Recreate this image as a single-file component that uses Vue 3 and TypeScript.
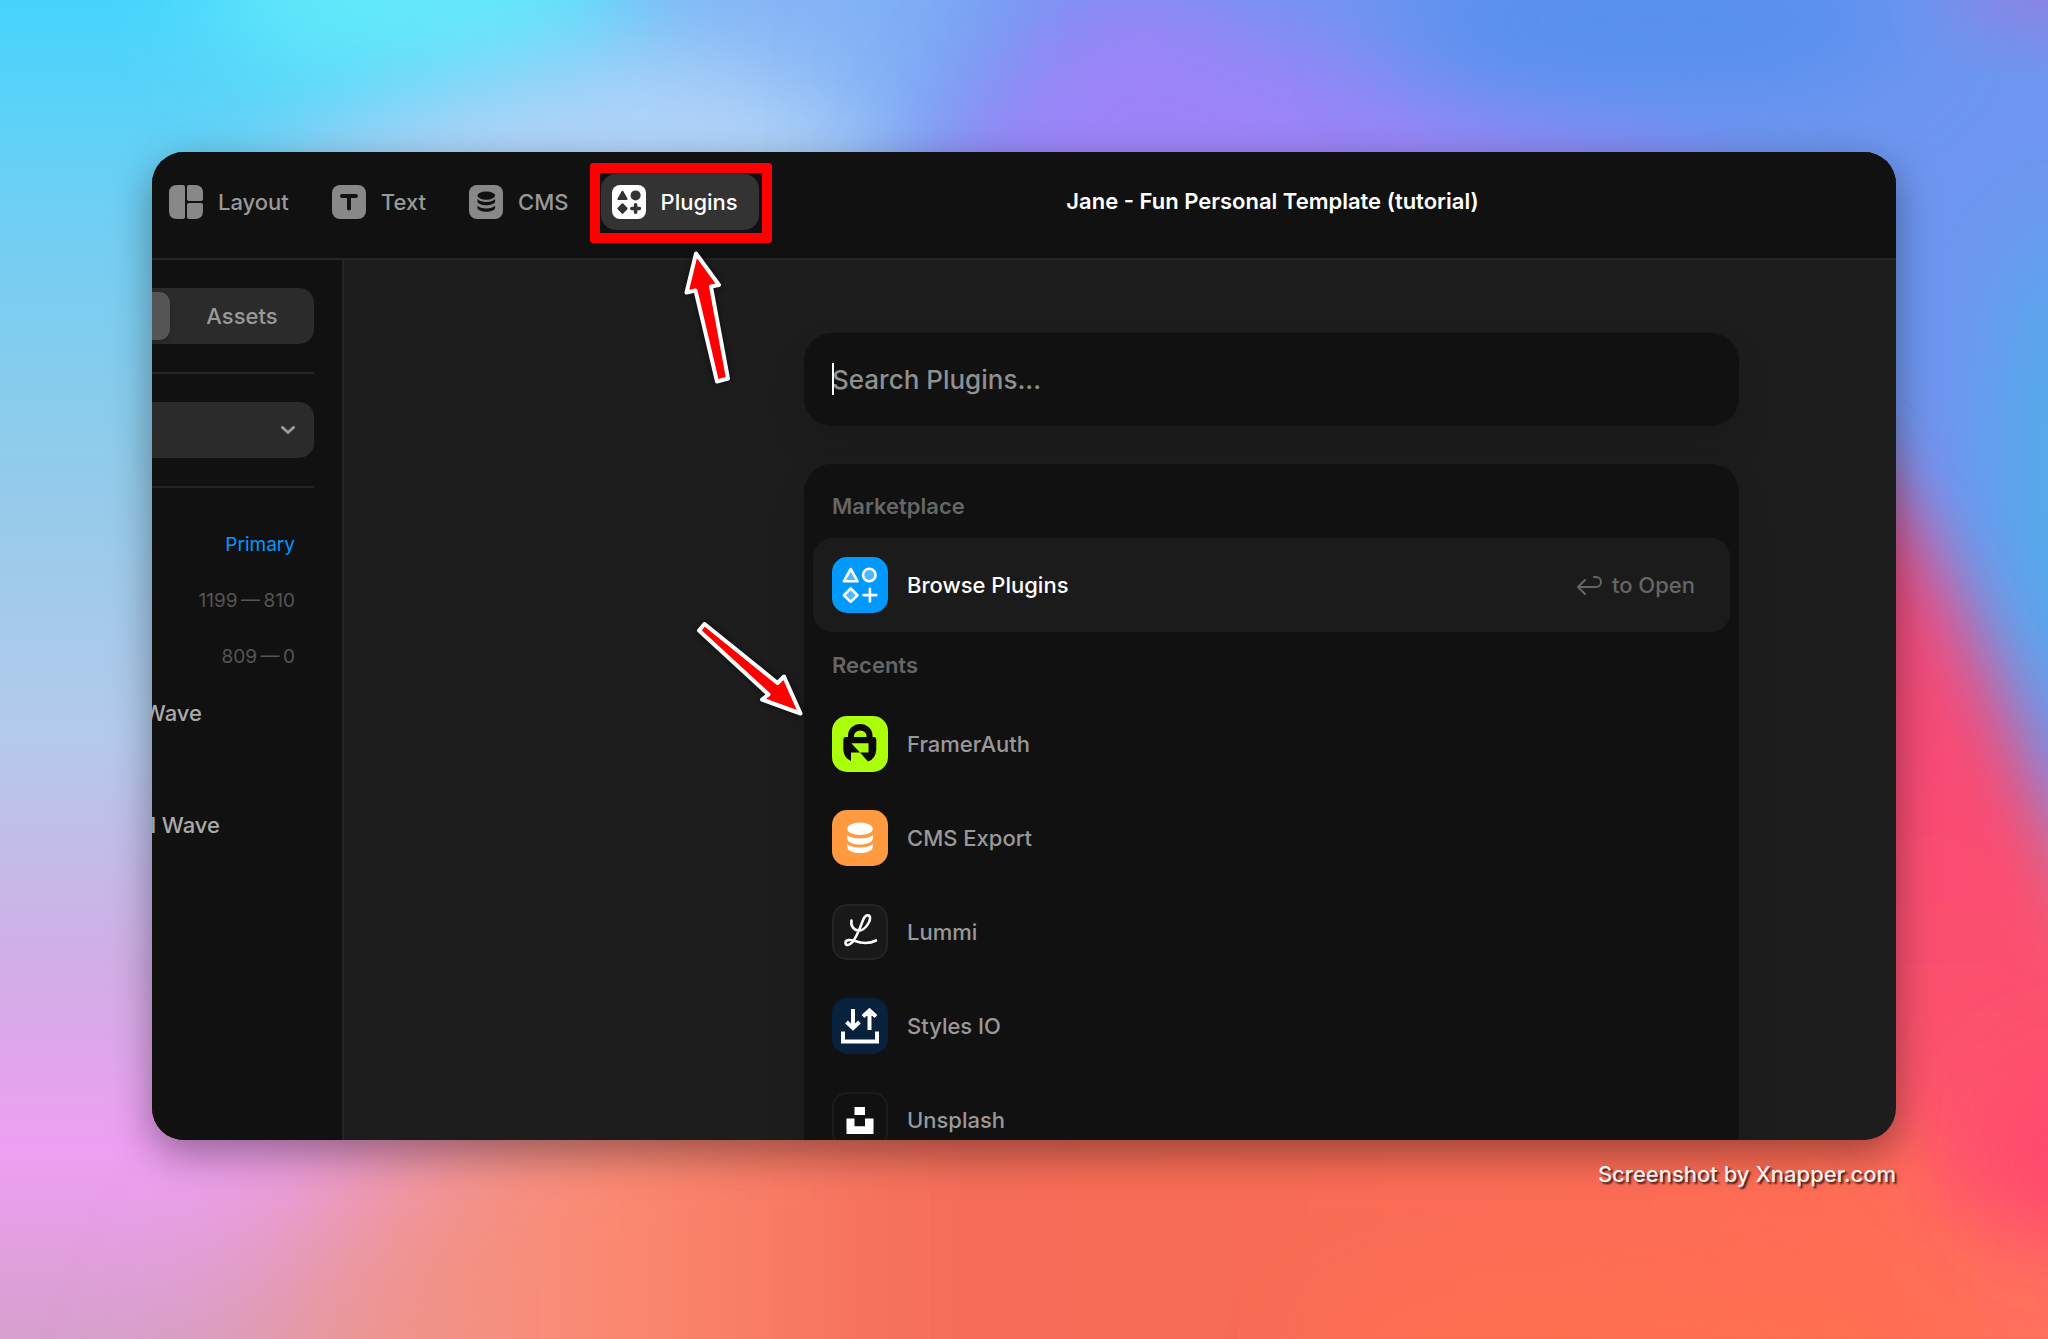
<script setup lang="ts">
import { ref } from 'vue'

type PluginIcon = 'auth' | 'export' | 'lummi' | 'styles' | 'unsplash'

interface PluginEntry {
  name: string
  icon: PluginIcon
}

const recents: PluginEntry[] = [
  { name: 'FramerAuth', icon: 'auth' },
  { name: 'CMS Export', icon: 'export' },
  { name: 'Lummi', icon: 'lummi' },
  { name: 'Styles IO', icon: 'styles' },
  { name: 'Unsplash', icon: 'unsplash' },
]

const query = ref('')
</script>

<template>
  <div class="page">
    <svg class="wallpaper" viewBox="0 0 2048 1339" preserveAspectRatio="none" aria-hidden="true">
      <defs>
        <linearGradient id="base" x1="0" y1="0" x2="0" y2="1">
          <stop offset="0" stop-color="#46d4fc" />
          <stop offset="0.16" stop-color="#70cff4" />
          <stop offset="0.35" stop-color="#92cbea" />
          <stop offset="0.55" stop-color="#b4caec" />
          <stop offset="0.72" stop-color="#d2aee6" />
          <stop offset="0.86" stop-color="#ee9ff2" />
          <stop offset="1" stop-color="#d6a0cc" />
        </linearGradient>
        <linearGradient id="flame" x1="0" y1="0" x2="1" y2="0">
          <stop offset="0" stop-color="#e29cac" />
          <stop offset="0.1" stop-color="#f0948a" />
          <stop offset="0.19" stop-color="#fc8a70" />
          <stop offset="0.25" stop-color="#fa7e66" />
          <stop offset="0.34" stop-color="#f46c58" />
          <stop offset="0.75" stop-color="#ff6c54" />
          <stop offset="1" stop-color="#ff7a70" />
        </linearGradient>
        <linearGradient id="rose" x1="0" y1="0" x2="0" y2="1">
          <stop offset="0" stop-color="#e84c84" />
          <stop offset="0.5" stop-color="#fa4c72" />
          <stop offset="1" stop-color="#ff5868" />
        </linearGradient>
        <filter id="haze" x="-50%" y="-50%" width="200%" height="200%">
          <feGaussianBlur stdDeviation="80" />
        </filter>
        <filter id="soft" x="-50%" y="-50%" width="200%" height="200%">
          <feGaussianBlur stdDeviation="50" />
        </filter>
        <filter id="crisp" x="-50%" y="-50%" width="200%" height="200%">
          <feGaussianBlur stdDeviation="34" />
        </filter>
      </defs>
      <rect width="2048" height="1339" fill="url(#base)" />
      <path d="M560 -200 H2300 V500 H700Z" fill="#84b4f6" filter="url(#haze)" />
      <ellipse cx="410" cy="0" rx="210" ry="70" fill="#66ecfa" filter="url(#soft)" />
      <path d="M250 200 Q400 80 640 50 Q900 60 1000 400 H230Z" fill="#b2d4f8" filter="url(#soft)" />
      <path d="M1000 -200 H2300 V1000 H900 L960 60Z" fill="#6e96f0" filter="url(#haze)" />
      <path d="M890 260 Q990 60 1120 -40 Q1280 50 1600 130 Q1760 160 1760 300 H900Z" fill="#9c84f8" filter="url(#soft)" />
      <ellipse cx="1650" cy="20" rx="260" ry="80" fill="#5690ee" filter="url(#soft)" />
      <ellipse cx="2060" cy="-10" rx="110" ry="40" fill="#9080e0" filter="url(#crisp)" />
      <ellipse cx="2070" cy="470" rx="60" ry="240" fill="#50b0ea" filter="url(#soft)" />
      <path d="M180 1560 Q240 1240 480 1060 L1500 900 H2400 V1600Z" fill="url(#flame)" filter="url(#haze)" />
      <path d="M1700 420 L1840 420 Q1990 590 2120 1040 V1230 L1960 1210 L1800 1000Z" fill="url(#rose)" filter="url(#crisp)" />
      <ellipse cx="1640" cy="1350" rx="320" ry="70" fill="#ff7050" filter="url(#soft)" />
      <ellipse cx="2070" cy="1150" rx="80" ry="90" fill="#ff466e" filter="url(#soft)" />
    </svg>

    <div class="window">
      <header class="topbar">
        <nav class="tools">
          <button type="button" class="tool">
            <svg class="tool-icon" viewBox="0 0 34 34" aria-hidden="true">
              <path d="M8 0H14Q16 0 16 2V32Q16 34 14 34H8Q0 34 0 26V8Q0 0 8 0Z" />
              <path d="M20 0H26Q34 0 34 8V14Q34 16 32 16H20Q18 16 18 14V2Q18 0 20 0Z" />
              <path d="M20 18H32Q34 18 34 20V26Q34 34 26 34H20Q18 34 18 32V20Q18 18 20 18Z" />
            </svg>
            <span>Layout</span>
          </button>
          <button type="button" class="tool">
            <svg class="tool-icon" viewBox="0 0 34 34" aria-hidden="true">
              <rect width="34" height="34" rx="8" />
              <path d="M10 11H24M17 11V23.5" fill="none" stroke="#111" stroke-width="4" stroke-linecap="round" />
            </svg>
            <span>Text</span>
          </button>
          <button type="button" class="tool">
            <svg class="tool-icon" viewBox="0 0 34 34" aria-hidden="true">
              <rect width="34" height="34" rx="8" />
              <g fill="#111">
                <ellipse cx="17.3" cy="10.6" rx="8.8" ry="4.2" />
                <path d="M8.5 14C11 18 23.5 18 26.1 14V16.5C25 21.5 9.5 21.5 8.5 16.5Z" />
                <path d="M8.5 20.5C11 24.5 23.5 24.5 26.1 20.5V23C25 28 9.5 28 8.5 23Z" />
              </g>
            </svg>
            <span>CMS</span>
          </button>
          <div class="marked">
            <button type="button" class="tool active">
              <svg class="tool-icon" viewBox="0 0 34 34" aria-hidden="true">
                <rect width="34" height="34" rx="8" />
                <g fill="#333" stroke="#333" stroke-linejoin="round" stroke-linecap="round">
                  <path d="M10.5 6.8L14.6 14H6.4Z" stroke-width="2" />
                  <circle cx="23.6" cy="10.4" r="5" stroke="none" />
                  <path d="M10.5 19.2L14.6 23.5L10.5 27.8L6.4 23.5Z" stroke-width="2" />
                  <path d="M23.6 19.7V27.3M19.8 23.5H27.4" stroke-width="3.6" />
                </g>
              </svg>
              <span>Plugins</span>
            </button>
            <span class="highlight"></span>
            <svg class="arrow arrow-up" viewBox="683 250 46 134" aria-hidden="true">
              <path d="M695 253.5L718 285L710 286.5L727 378.5L716 381.5L694.5 290.5L685.5 292.5Z" />
            </svg>
          </div>
        </nav>
        <h1 class="title">Jane - Fun Personal Template (tutorial)</h1>
      </header>

      <div class="workspace">
        <aside class="sidebar">
          <div class="tabs">
            <span class="tab-thumb"></span>
            <button type="button" class="tab">Assets</button>
          </div>
          <button type="button" class="picker" aria-label="Choose page">
            <svg class="chevron" viewBox="0 0 14 8" aria-hidden="true"><path d="M1.5 1.5L7 6.5L12.5 1.5" /></svg>
          </button>
          <ul class="layers">
            <li class="range primary">Primary</li>
            <li class="range">1199&thinsp;—&thinsp;810</li>
            <li class="range">809&thinsp;—&thinsp;0</li>
            <li class="layer"><span class="layer-name short">Wave</span></li>
            <li class="layer"></li>
            <li class="layer"><span class="layer-name long">l Wave</span></li>
          </ul>
        </aside>

        <main class="canvas">
          <div class="search">
            <span class="caret"></span>
            <input v-model="query" type="text" class="search-input" placeholder="Search Plugins..." aria-label="Search plugins" />
          </div>

          <section class="results">
            <svg class="arrow arrow-down" viewBox="696 620 110 100" aria-hidden="true">
              <path d="M704.5 624L777.5 683L784 676.5L800.5 713.5L762 699.5L768.5 694.5L699 630.5Z" />
            </svg>
            <h2 class="group">Marketplace</h2>
            <button type="button" class="entry selected">
              <svg class="entry-icon" viewBox="0 0 56 56" aria-hidden="true">
                <rect width="56" height="56" rx="15" fill="#0099ff" />
                <g fill="#ffffff4d" stroke="#fff" stroke-width="2.6" stroke-linejoin="round" stroke-linecap="round">
                  <path d="M18.7 12L25.6 24.3H11.8Z" />
                  <circle cx="37.3" cy="18" r="6.3" />
                  <path d="M18.7 31.5L25.5 38.2L18.7 44.9L11.9 38.2Z" />
                  <path d="M37.9 31.7V44.5M31.5 38.1H44.3" />
                </g>
              </svg>
              <span>Browse Plugins</span>
              <span class="hint">
                <svg class="return" viewBox="0 0 26 20" aria-hidden="true">
                  <path d="M18 2H20A5 5 0 0 1 20 12H2M9 5L2 12L9 19" />
                </svg>
                to Open
              </span>
            </button>
            <h2 class="group">Recents</h2>
            <button v-for="plugin in recents" :key="plugin.name" type="button" class="entry">
              <svg v-if="plugin.icon === 'auth'" class="entry-icon" viewBox="0 0 56 56" aria-hidden="true">
                <rect width="56" height="56" rx="15" fill="#abff0a" />
                <path
                  fill="#0a0a0a"
                  fill-rule="evenodd"
                  d="M14 21H16V19.5A12 11.3 0 0 1 40.5 19.5V21H42Q44.3 21 44.3 24V34Q43.5 43 36 45.5L28 36.5H36.5V27.3H19.3L28 36.5H19V45Q12 42 11.3 34V24Q11.3 21 14 21ZM22 21H34.5V20A6.25 5.5 0 0 0 22 20Z"
                />
              </svg>
              <svg v-else-if="plugin.icon === 'export'" class="entry-icon" viewBox="0 0 56 56" aria-hidden="true">
                <rect width="56" height="56" rx="15" fill="#ff9a40" />
                <g fill="#fff">
                  <ellipse cx="28" cy="18.8" rx="12.8" ry="6.2" />
                  <path d="M15.2 25C19 29.5 37 29.5 40.8 25V28.5C40 36.5 16 36.5 15.2 28.5Z" />
                  <path d="M15.2 34C19 38.5 37 38.5 40.8 34V37C40 45 16 45 15.2 37Z" />
                </g>
              </svg>
              <svg v-else-if="plugin.icon === 'lummi'" class="entry-icon" viewBox="0 0 56 56" aria-hidden="true">
                <rect x="1" y="1" width="54" height="54" rx="14" fill="#191919" stroke="#242424" stroke-width="2" />
                <path
                  fill="none"
                  stroke="#fff"
                  stroke-width="2.6"
                  stroke-linecap="round"
                  d="M19.5 16.5C18.5 21.5 21.5 27 27.5 26.5C33.5 26 38.5 17 38 13.5C37.5 10 33.5 10.5 31.5 15C28.5 22 25.5 32 20.5 38C17.5 41.5 13.5 42 13.5 39C13.5 35.5 18 35.5 23 37C30 39.5 38 39.5 44 36.5"
                />
              </svg>
              <svg v-else-if="plugin.icon === 'styles'" class="entry-icon" viewBox="0 0 56 56" aria-hidden="true">
                <rect width="56" height="56" rx="15" fill="#08213d" />
                <path
                  fill="none"
                  stroke="#fff"
                  stroke-width="4"
                  d="M21 11V29M14.5 24L21 30L27.5 24M37.5 32V14M31 18.5L37.5 12.5L44 18.5M11 33.5V43.5H45V33.5"
                />
              </svg>
              <svg v-else class="entry-icon" viewBox="0 0 56 56" aria-hidden="true">
                <rect x="1" y="1" width="54" height="54" rx="14" fill="#111" stroke="#1c1c1c" stroke-width="2" />
                <path fill="#fff" d="M22.5 15H33V23H22.5ZM14.5 26.5H22.5V34.3H33V26.5H41.5V42H14.5Z" />
              </svg>
              <span>{{ plugin.name }}</span>
            </button>
          </section>
        </main>
      </div>
    </div>

    <footer class="credit">Screenshot by Xnapper.com</footer>
  </div>
</template>

<style>
body {
  margin: 0;
}
</style>

<style scoped>
.page {
  position: relative;
  display: flex;
  flex-direction: column;
  height: 100vh;
  padding: 152px 152px 151px;
  box-sizing: border-box;
  overflow: hidden;
  font-family: Inter, "Liberation Sans", sans-serif;
  font-size: 22px;
  font-weight: 500;
  line-height: 28px;
  color: #999;
}

.page *,
.page *::before {
  box-sizing: border-box;
}

.wallpaper {
  position: absolute;
  inset: 0;
  width: 100%;
  height: 100%;
}

button {
  margin: 0;
  padding: 0;
  border: 0;
  background: none;
  color: inherit;
  font: inherit;
  text-align: left;
}

.window {
  position: relative;
  flex: 1;
  min-height: 0;
  display: flex;
  flex-direction: column;
  overflow: hidden;
  border-radius: 32px;
  background: #1d1d1d;
  box-shadow: 0 14px 40px rgba(0, 0, 0, 0.38);
}

.topbar {
  position: relative;
  z-index: 1;
  flex: none;
  display: flex;
  align-items: flex-start;
  justify-content: space-between;
  height: 108px;
  padding: 22px 156px 0 6px;
  border-bottom: 2px solid #242424;
  background: #111;
}

.tools {
  display: flex;
  gap: 11px;
}

.tool {
  display: flex;
  align-items: center;
  gap: 15px;
  height: 56px;
  padding: 0 21px 0 11px;
  border-radius: 15px;
}

.tool.active {
  background: #333;
  color: #fff;
}

.tool-icon {
  width: 34px;
  height: 34px;
  fill: #888;
}

.active .tool-icon {
  fill: #fff;
}

.marked {
  position: relative;
}

.highlight {
  position: absolute;
  inset: -11px -13px -13px -11px;
  border: 10px solid #f00;
  border-radius: 3px;
}

.arrow {
  position: absolute;
  overflow: visible;
  fill: #f00;
  stroke: #fff;
  stroke-width: 4;
  stroke-linejoin: round;
  filter: drop-shadow(0 0 3px rgba(0, 0, 0, 0.6));
}

.arrow-up {
  top: 76px;
  left: 83px;
  width: 46px;
  height: 134px;
}

.arrow-down {
  top: 156px;
  left: -108px;
  width: 110px;
  height: 100px;
}

.title {
  flex: 0 1 935px;
  margin: 0;
  font-size: 22px;
  font-weight: 600;
  line-height: 54px;
  text-align: center;
  color: #fff;
}

.workspace {
  flex: 1;
  min-height: 0;
  display: flex;
}

.sidebar {
  flex: none;
  width: 192px;
  padding: 28px 28px 0 0;
  border-right: 2px solid #242424;
  background: #111;
}

.tabs {
  display: flex;
  align-items: center;
  height: 56px;
  border-radius: 0 15px 15px 0;
  background: #2b2b2b;
}

.tab-thumb {
  width: 18px;
  height: 48px;
  border-radius: 0 11px 11px 0;
  background: #555;
  box-shadow: 0 2px 4px rgba(0, 0, 0, 0.2);
}

.tab {
  flex: 1;
  text-align: center;
}

.picker {
  display: flex;
  align-items: center;
  justify-content: flex-end;
  width: 100%;
  height: 56px;
  margin-top: 58px;
  padding-right: 19px;
  border-radius: 0 15px 15px 0;
  background: #2b2b2b;
  position: relative;
}

.picker::before {
  content: "";
  position: absolute;
  top: -30px;
  left: 0;
  right: 0;
  height: 2px;
  background: #242424;
}

.chevron {
  width: 14px;
  height: 8px;
  fill: none;
  stroke: #999;
  stroke-width: 3;
  stroke-linecap: round;
  stroke-linejoin: round;
}

.layers {
  margin: 28px 0 0;
  padding: 29px 0 0;
  border-top: 2px solid #242424;
  list-style: none;
}

.range,
.layer {
  height: 56px;
  line-height: 56px;
  white-space: nowrap;
}

.range {
  padding-right: 19px;
  font-size: 19px;
  font-weight: 400;
  text-align: right;
  color: #555;
}

.primary {
  color: #0099ff;
}

.layer {
  color: #aaa;
}

.layer-name {
  display: flex;
  justify-content: flex-end;
}

.short {
  width: 50px;
}

.long {
  width: 68px;
}

.canvas {
  flex: 1;
  min-width: 0;
  display: flex;
  flex-direction: column;
  align-items: flex-end;
  gap: 38px;
  padding: 73px 157px 0 157px;
}

.search {
  position: relative;
  flex: none;
  width: 100%;
  max-width: 935px;
  height: 93px;
  padding: 0 28px;
  border-radius: 28px;
  background: #111;
  box-shadow: 0 20px 40px rgba(0, 0, 0, 0.12);
}

.search-input {
  width: 100%;
  height: 100%;
  padding: 0;
  border: 0;
  outline: 0;
  background: none;
  color: #fff;
  font: inherit;
  font-size: 26px;
}

.search-input::placeholder {
  color: #909090;
  opacity: 1;
}

.caret {
  position: absolute;
  top: 30px;
  left: 28px;
  width: 2px;
  height: 32px;
  background: #fff;
}

.results {
  position: relative;
  flex: none;
  width: 100%;
  max-width: 935px;
  padding: 9px 9px 28px;
  border-radius: 28px;
  background: #111;
  box-shadow: 0 20px 40px rgba(0, 0, 0, 0.12);
}

.group {
  margin: 0;
  padding: 2px 0 0 19px;
  font-size: 22px;
  font-weight: 600;
  line-height: 63px;
  color: #666;
}

.entry {
  display: flex;
  align-items: center;
  gap: 19px;
  width: 100%;
  height: 94px;
  padding: 0 35px 0 19px;
  border-radius: 19px;
}

.entry.selected {
  background: #1b1b1b;
  color: #fff;
}

.entry-icon {
  width: 56px;
  height: 56px;
}

.hint {
  display: flex;
  align-items: center;
  gap: 10px;
  margin-left: auto;
  color: #666;
}

.return {
  width: 26px;
  height: 20px;
  fill: none;
  stroke: #666;
  stroke-width: 2;
  stroke-linecap: round;
  stroke-linejoin: round;
}

.credit {
  position: relative;
  flex: none;
  margin-top: 20px;
  text-align: right;
  color: #f8eef0;
  text-shadow: 2px 2px 2px rgba(0, 0, 0, 0.75);
}
</style>
